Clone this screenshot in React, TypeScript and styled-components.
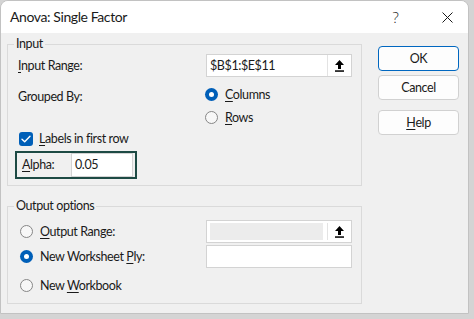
import React from 'react';
import styled, { createGlobalStyle, css } from 'styled-components';

const Global = createGlobalStyle`
  html, body { margin: 0; padding: 0; }
  body {
    background: #d4d4d4;
    width: 474px;
    height: 319px;
    overflow: hidden;
    font-family: Lato, "Open Sans", "Noto Sans", sans-serif;
    letter-spacing: -0.4px;
    color: #1a1a1a;
  }
  * { box-sizing: border-box; }
`;

const Window = styled.div`
  width: 469px;
  height: 314px;
  background: #f0f0f0;
  border: 1px solid #c2c2c2;
  border-radius: 8px 8px 0 0;
  overflow: hidden;
  display: flex;
  flex-direction: column;
`;

const TitleBar = styled.div`
  height: 32px;
  flex: none;
  background: #ffffff;
  display: flex;
  align-items: center;
  padding-left: 9px;
`;

const Title = styled.div`
  flex: 1;
  font-size: 14px;
  line-height: 18px;
  color: #1a1a1a;
`;

const CaptionButton = styled.div<{ $w: number }>`
  width: ${p => p.$w}px;
  height: 32px;
  display: flex;
  align-items: center;
  justify-content: center;
  font-family: "Open Sans", sans-serif;
  font-size: 15px;
  font-weight: 300;
  color: #1a1a1a;
`;

const Body = styled.div`
  flex: 1;
  display: flex;
  padding: 3px 0 0 6px;
`;

const LeftCol = styled.div`
  width: 355px;
  display: flex;
  flex-direction: column;
  gap: 12px;
`;

const RightCol = styled.div`
  margin-left: 16px;
  padding-top: 10px;
  display: flex;
  flex-direction: column;
  width: 81px;
`;

const Group = styled.fieldset`
  margin: 0;
  padding: 0;
  min-width: 0;
  border: 1px solid #dadada;
`;

const Legend = styled.legend`
  margin-left: 6px;
  padding: 0 2px;
  font-size: 12.5px;
  line-height: 16px;
  color: #1a1a1a;
`;

const GroupContent = styled.div<{ $pt: number; $pb: number }>`
  display: flex;
  flex-direction: column;
  padding: ${p => p.$pt}px 9px ${p => p.$pb}px 10px;
`;

const Row = styled.div<{ $mt?: number; $h?: number }>`
  display: flex;
  align-items: center;
  height: ${p => p.$h ?? 23}px;
  margin-top: ${p => p.$mt ?? 0}px;
`;

const TopRow = styled.div<{ $mt?: number }>`
  display: flex;
  align-items: flex-start;
  margin-top: ${p => p.$mt ?? 0}px;
`;

const Label = styled.span<{ $pt?: number }>`
  font-size: 12.5px;
  line-height: 16px;
  padding-top: ${p => p.$pt ?? 0}px;
  white-space: nowrap;
`;

const U = styled.span`
  text-decoration: underline;
  text-underline-offset: 2px;
  text-decoration-thickness: 1px;
`;

const Field = styled.div<{ $disabled?: boolean }>`
  margin-left: auto;
  width: 146px;
  height: 23px;
  background: #ffffff;
  border: 1px solid #d3d3d3;
  display: flex;
  align-items: stretch;
  ${p => p.$disabled && css`padding: 2px 0 2px 3px;`}
`;

const FieldText = styled.div`
  flex: 1;
  font-size: 12.5px;
  line-height: 21px;
  padding-left: 3px;
`;

const DisabledFill = styled.div`
  flex: 1;
  background: #ececec;
  margin-right: 4px;
`;

const PickButton = styled.div`
  width: 24px;
  flex: none;
  background: #ffffff;
  border-left: 1px solid #e3e3e3;
  display: flex;
  align-items: center;
  justify-content: center;
`;

const RadioGroup = styled.div`
  margin-left: auto;
  width: 147px;
  display: flex;
  flex-direction: column;
`;

const RadioItem = styled.div<{ $ml?: number }>`
  display: flex;
  align-items: center;
  height: 23px;
  gap: 7px;
  margin-left: ${p => p.$ml ?? 0}px;
`;

const RadioDot = styled.span<{ $on?: boolean }>`
  width: 13px;
  height: 13px;
  flex: none;
  border-radius: 50%;
  display: flex;
  align-items: center;
  justify-content: center;
  ${p =>
    p.$on
      ? css`
          background: #005fb8;
          &::after {
            content: '';
            width: 5px;
            height: 5px;
            border-radius: 50%;
            background: #ffffff;
          }
        `
      : css`
          background: #f7f7f7;
          border: 1px solid #868686;
        `}
`;

const CheckRow = styled.div`
  display: flex;
  align-items: center;
  height: 20px;
  gap: 6px;
  padding-left: 1px;
`;

const CheckBox = styled.span`
  width: 14px;
  height: 14px;
  border-radius: 3px;
  background: #005fb8;
  display: flex;
  align-items: center;
  justify-content: center;
  flex: none;
`;

const AlphaBox = styled.div`
  margin-top: 2px;
  margin-left: -3px;
  width: 122px;
  height: 28px;
  border: 2px solid #1d4a44;
  display: flex;
  align-items: center;
  padding-left: 5px;
`;

const AlphaInput = styled.div`
  margin-left: auto;
  margin-right: 2px;
  width: 62px;
  height: 24px;
  background: #ffffff;
  border: 1px solid #d3d3d3;
  font-size: 12.5px;
  line-height: 22px;
  padding-left: 3px;
`;

const Button = styled.div<{ $mt?: number; $default?: boolean }>`
  height: 25px;
  margin-top: ${p => p.$mt ?? 0}px;
  background: #fdfdfd;
  border: 1px solid ${p => (p.$default ? '#0067c0' : '#d1d1d1')};
  border-radius: 4px;
  display: flex;
  align-items: center;
  justify-content: center;
  font-size: 12.5px;
  color: #1a1a1a;
`;

const UpArrow = () => (
  <svg width="9" height="12" viewBox="0 0 9 12">
    <path d="M4.5 0 L9 5 H6 V9 H3 V5 H0 Z" fill="#000" />
    <rect x="0" y="10.3" width="9" height="1.5" fill="#000" />
  </svg>
);

const CloseIcon = () => (
  <svg width="11" height="11" viewBox="0 0 11 11">
    <path d="M0.5 0.5 L10.5 10.5 M10.5 0.5 L0.5 10.5" stroke="#1a1a1a" strokeWidth="1" fill="none" />
  </svg>
);

const CheckIcon = () => (
  <svg width="10" height="8" viewBox="0 0 10 8">
    <path d="M1 4.2 L3.7 6.8 L9 1.2" stroke="#fff" strokeWidth="1.4" fill="none" strokeLinecap="round" strokeLinejoin="round" />
  </svg>
);

export default function App() {
  return (
    <>
      <Global />
      <Window>
        <TitleBar>
          <Title>Anova: Single Factor</Title>
          <CaptionButton $w={61}>?</CaptionButton>
          <CaptionButton $w={42}>
            <CloseIcon />
          </CaptionButton>
        </TitleBar>
        <Body>
          <LeftCol>
            <Group>
              <Legend>Input</Legend>
              <GroupContent $pt={2} $pb={6}>
                <Row>
                  <Label>
                    <U>I</U>nput Range:
                  </Label>
                  <Field>
                    <FieldText>$B$1:$E$11</FieldText>
                    <PickButton>
                      <UpArrow />
                    </PickButton>
                  </Field>
                </Row>
                <TopRow $mt={6}>
                  <Label $pt={6}>Grouped By:</Label>
                  <RadioGroup>
                    <RadioItem>
                      <RadioDot $on />
                      <Label>
                        <U>C</U>olumns
                      </Label>
                    </RadioItem>
                    <RadioItem>
                      <RadioDot />
                      <Label>
                        <U>R</U>ows
                      </Label>
                    </RadioItem>
                  </RadioGroup>
                </TopRow>
                <CheckRow>
                  <CheckBox>
                    <CheckIcon />
                  </CheckBox>
                  <Label>
                    <U>L</U>abels in first row
                  </Label>
                </CheckRow>
                <AlphaBox>
                  <Label>
                    <U>A</U>lpha:
                  </Label>
                  <AlphaInput>0.05</AlphaInput>
                </AlphaBox>
              </GroupContent>
            </Group>
            <Group>
              <Legend>Output options</Legend>
              <GroupContent $pt={6} $pb={6}>
                <Row>
                  <RadioItem $ml={2}>
                    <RadioDot />
                    <Label>
                      <U>O</U>utput Range:
                    </Label>
                  </RadioItem>
                  <Field $disabled>
                    <DisabledFill />
                    <PickButton>
                      <UpArrow />
                    </PickButton>
                  </Field>
                </Row>
                <Row $mt={2}>
                  <RadioItem $ml={2}>
                    <RadioDot $on />
                    <Label>
                      New Worksheet <U>P</U>ly:
                    </Label>
                  </RadioItem>
                  <Field />
                </Row>
                <Row $mt={6}>
                  <RadioItem $ml={2}>
                    <RadioDot />
                    <Label>
                      New <U>W</U>orkbook
                    </Label>
                  </RadioItem>
                </Row>
              </GroupContent>
            </Group>
          </LeftCol>
          <RightCol>
            <Button $default>OK</Button>
            <Button $mt={4}>Cancel</Button>
            <Button $mt={10}>
              <U>H</U>elp
            </Button>
          </RightCol>
        </Body>
      </Window>
    </>
  );
}
